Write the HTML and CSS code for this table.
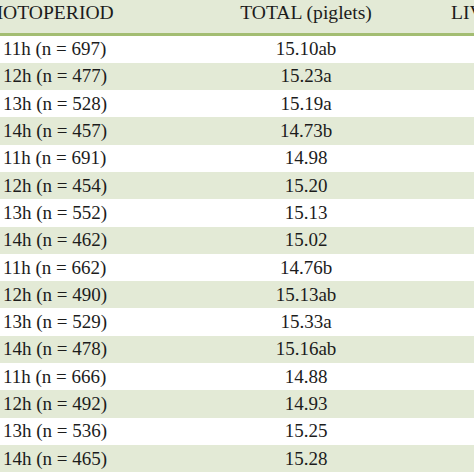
FILE: index.html
```html
<!DOCTYPE html>
<html>
<head>
<meta charset="utf-8">
<link rel="stylesheet" href="styles.css">
</head>
<body>
<table class="data">
  <colgroup>
    <col class="c1"><col class="c2"><col class="c3">
  </colgroup>
  <thead>
    <tr>
      <th class="h1">PHOTOPERIOD</th>
      <th class="h2">TOTAL (piglets)</th>
      <th class="h3">LIVE BORN (piglets)</th>
    </tr>
  </thead>
  <tbody>
    <tr><td class="lab">11h (n = 697)</td><td class="num">15.10ab</td><td></td></tr>
    <tr><td class="lab">12h (n = 477)</td><td class="num">15.23a</td><td></td></tr>
    <tr><td class="lab">13h (n = 528)</td><td class="num">15.19a</td><td></td></tr>
    <tr><td class="lab">14h (n = 457)</td><td class="num">14.73b</td><td></td></tr>
    <tr><td class="lab">11h (n = 691)</td><td class="num">14.98</td><td></td></tr>
    <tr><td class="lab">12h (n = 454)</td><td class="num">15.20</td><td></td></tr>
    <tr><td class="lab">13h (n = 552)</td><td class="num">15.13</td><td></td></tr>
    <tr><td class="lab">14h (n = 462)</td><td class="num">15.02</td><td></td></tr>
    <tr><td class="lab">11h (n = 662)</td><td class="num">14.76b</td><td></td></tr>
    <tr><td class="lab">12h (n = 490)</td><td class="num">15.13ab</td><td></td></tr>
    <tr><td class="lab">13h (n = 529)</td><td class="num">15.33a</td><td></td></tr>
    <tr><td class="lab">14h (n = 478)</td><td class="num">15.16ab</td><td></td></tr>
    <tr><td class="lab">11h (n = 666)</td><td class="num">14.88</td><td></td></tr>
    <tr><td class="lab">12h (n = 492)</td><td class="num">14.93</td><td></td></tr>
    <tr><td class="lab">13h (n = 536)</td><td class="num">15.25</td><td></td></tr>
    <tr><td class="lab">14h (n = 465)</td><td class="num">15.28</td><td></td></tr>
  </tbody>
</table>
</body>
</html>
```

FILE: styles.css
```css
html, body {
  margin: 0;
  padding: 0;
  background: #ffffff;
  overflow: hidden;
}

body {
  font-family: "Liberation Serif", Tinos, "Times New Roman", Times, serif;
}

.data {
  border-collapse: collapse;
  table-layout: fixed;
  width: 680px;
  font-family: "Liberation Serif", Tinos, "Times New Roman", Times, serif;
  font-size: 19px;
  color: #1c1c1c;
}

.c1 { width: 200px; }
.c2 { width: 212px; }
.c3 { width: 268px; }

.data th {
  font-weight: normal;
  font-size: 19.6px;
  background: #e3ead6;
  height: 34px;
  box-sizing: border-box;
  padding: 2px 0 0 0;
  vertical-align: top;
  border-bottom: 3px solid #a3bd72;
  white-space: nowrap;
  overflow: hidden;
}

.h1 {
  text-align: left;
  padding-left: 3px !important;
  text-indent: -25px;
}

.h2 {
  text-align: center;
}

.h3 {
  text-align: left;
  padding-left: 39px !important;
}

.data td {
  height: 27.31px;
  padding: 0;
  vertical-align: middle;
  white-space: nowrap;
}

.data tbody tr:nth-child(even) td {
  background: #e3ead6;
}

.lab {
  text-align: left;
  padding-left: 3px !important;
}

.num {
  text-align: center;
}
```
